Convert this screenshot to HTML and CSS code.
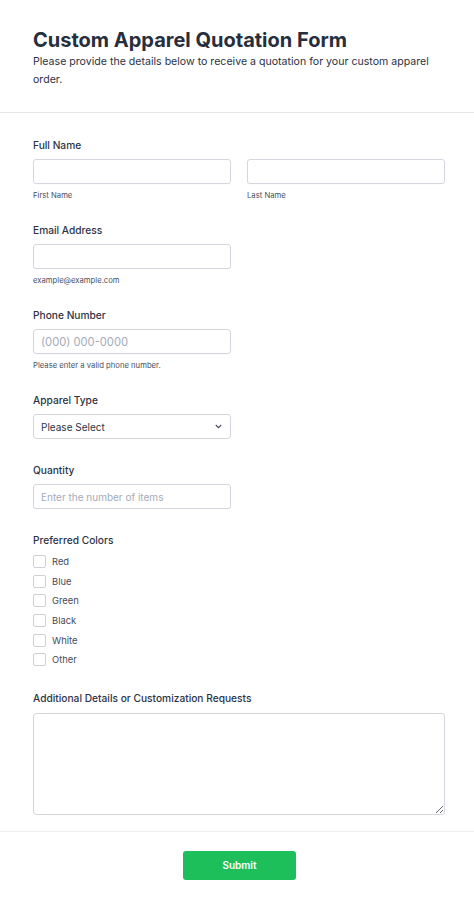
FILE: index.html
```html
<!DOCTYPE html>
<html lang="en">
<head>
<meta charset="utf-8">
<title>Custom Apparel Quotation Form</title>
<link rel="stylesheet" href="styles.css">
</head>
<body>
<div class="page">
  <header class="header">
    <h1 class="title">Custom Apparel Quotation Form</h1>
    <p class="subtitle">Please provide the details below to receive a quotation for your custom apparel order.</p>
  </header>
  <form class="form">
    <div class="field">
      <label class="label">Full Name</label>
      <div class="row">
        <div class="col">
          <input class="input" type="text">
          <span class="sublabel">First Name</span>
        </div>
        <div class="col">
          <input class="input" type="text">
          <span class="sublabel">Last Name</span>
        </div>
      </div>
    </div>
    <div class="field">
      <label class="label">Email Address</label>
      <input class="input half" type="email">
      <span class="sublabel">example@example.com</span>
    </div>
    <div class="field">
      <label class="label">Phone Number</label>
      <input class="input half phone" type="tel" placeholder="(000) 000-0000">
      <span class="sublabel">Please enter a valid phone number.</span>
    </div>
    <div class="field spaced">
      <label class="label">Apparel Type</label>
      <div class="select half">
        <span>Please Select</span>
        <svg class="chev" width="7" height="5" viewBox="0 0 7 5"><path d="M0.8 1l2.7 2.6L6.2 1" fill="none" stroke="#4b5260" stroke-width="1.2"/></svg>
      </div>
    </div>
    <div class="field spaced">
      <label class="label">Quantity</label>
      <input class="input half" type="text" placeholder="Enter the number of items">
    </div>
    <div class="field">
      <label class="label">Preferred Colors</label>
      <div class="checks">
        <label class="check"><span class="box"></span>Red</label>
        <label class="check"><span class="box"></span>Blue</label>
        <label class="check"><span class="box"></span>Green</label>
        <label class="check"><span class="box"></span>Black</label>
        <label class="check"><span class="box"></span>White</label>
        <label class="check"><span class="box"></span>Other</label>
      </div>
    </div>
    <div class="field last">
      <label class="label label-last">Additional Details or Customization Requests</label>
      <textarea class="textarea"></textarea>
    </div>
  </form>
  <footer class="footer">
    <button class="submit" type="button">Submit</button>
  </footer>
</div>
</body>
</html>
```
FILE: styles.css
```css
* { box-sizing: border-box; }
html, body { margin: 0; padding: 0; background: #fff; }
body {
  font-family: Inter, "Noto Sans", sans-serif;
  color: #2c3345;
}
.header {
  padding: 27px 33px 23px;
  border-bottom: 1px solid #e3e5e8;
}
.title {
  margin: 0;
  font-size: 20px;
  line-height: 26px;
  font-weight: 700;
  color: #272e3d;
}
.subtitle {
  margin: 0;
  font-size: 10.6px;
  line-height: 18px;
  color: #2c3345;
}
.form {
  padding: 24px 29px 16px 33px;
  border-bottom: 1px solid #eceef0;
}
.field {
  display: flex;
  flex-direction: column;
  margin-bottom: 20px;
}
.field.spaced { margin-bottom: 23px; }
.field.last { margin-bottom: 0; }
.label {
  font-size: 10.2px;
  line-height: 16px;
  font-weight: 500;
  color: #2c3345;
  margin-bottom: 6px;
}
.label-last { margin-bottom: 7px; }
.row {
  display: flex;
  gap: 16px;
}
.col {
  flex: 1;
  display: flex;
  flex-direction: column;
}
.input {
  height: 25px;
  border: 1px solid #d3d6dc;
  border-radius: 3px;
  padding: 0 7px;
  font-family: inherit;
  font-size: 10px;
  color: #2c3345;
  background: #fff;
  width: 100%;
  box-shadow: 0 1px 1px rgba(0,0,0,0.02);
}
.input::placeholder { color: #a4abb8; }
.input.phone { font-size: 11.2px; }
.half { width: 198px; }
.sublabel {
  margin-top: 6px;
  font-size: 7.7px;
  line-height: 12px;
  color: #4a5060;
}
.select {
  height: 25px;
  border: 1px solid #d3d6dc;
  border-radius: 3px;
  padding: 0 8px 0 7px;
  display: flex;
  align-items: center;
  justify-content: space-between;
  font-size: 10px;
  color: #2c3345;
}
.checks {
  display: flex;
  flex-direction: column;
  margin-top: -2px;
}
.check {
  display: flex;
  align-items: center;
  height: 19.6px;
  font-size: 9.4px;
  color: #444b5a;
}
.box {
  width: 13px;
  height: 13px;
  border: 1px solid #cdd0d6;
  border-radius: 2px;
  margin-right: 6px;
  background: #fff;
}
.textarea {
  display: block;
  width: 100%;
  height: 102px;
  border: 1px solid #d3d6dc;
  border-radius: 3px;
  resize: vertical;
  font-family: inherit;
  margin: 0;
}
.footer {
  display: flex;
  justify-content: center;
  padding: 19px 0 0 5px;
}
.submit {
  width: 113px;
  height: 29px;
  border: none;
  border-radius: 3px;
  background: #1dbf5a;
  color: #fff;
  font-family: inherit;
  font-size: 10px;
  font-weight: 600;
}
```
